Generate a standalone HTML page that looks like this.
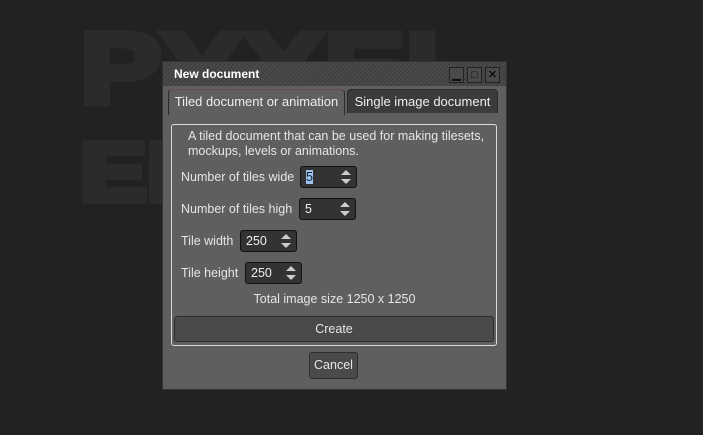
<!DOCTYPE html>
<html><head><style>
body{margin:0;width:703px;height:435px;background:#222;overflow:hidden;position:relative;font-family:"Liberation Sans",sans-serif;}
.a{position:absolute}
.logo{color:#2b2b2b;-webkit-text-stroke:7px #2b2b2b;font-weight:bold;font-family:"Liberation Sans",sans-serif;transform-origin:0 0;}
.dlg{left:163px;top:62px;width:343px;height:327px;background:#5f5f5f;box-shadow:0 0 0 1px #333;}
.title{left:0;top:0;width:343px;height:24px;background:repeating-linear-gradient(135deg,#3c3c3c 0 1px,#4a4a4a 1px 3px);color:#fff;font-weight:bold;font-size:12px;line-height:24px;}
.wb{top:5px;width:15px;height:16px;background:#4a4a4a;border:1px solid #222;box-sizing:border-box;color:#111;font-size:11px;text-align:center;line-height:14px;font-weight:bold}
.tab{height:24px;border:1px solid #2a2a2a;border-bottom:none;border-radius:4px 4px 0 0;color:#eee;font-size:13px;line-height:24px;text-align:center;box-sizing:border-box}
.t{color:#e6e6e6;font-size:12.5px;}
.sp{height:22px;background:#333;border:1px solid #111;border-radius:3px;box-sizing:border-box;color:#eee;font-size:12.5px;line-height:20px;padding-left:5px}
.ar{position:absolute;right:5px;top:3px;width:0;height:0;border-left:5px solid transparent;border-right:5px solid transparent;border-bottom:5px solid #ccc}
.ar2{position:absolute;right:5px;top:12px;width:0;height:0;border-left:5px solid transparent;border-right:5px solid transparent;border-top:5px solid #ccc}
</style></head><body>
<div class="a logo" style="left:80px;top:14px;font-size:100px;line-height:110px;transform:scaleX(1.22)">PYXEL</div>
<div class="a logo" style="left:80px;top:128px;font-size:82px;line-height:90px;transform:scaleX(1.22)">ED</div>
<div class="a dlg">
 <div class="a title"><span style="margin-left:11px">New document</span></div>
 <div class="a wb" style="left:286px">▁</div>
 <div class="a wb" style="left:304px">□</div>
 <div class="a wb" style="left:322px">✕</div>
 <div class="a tab" style="left:5px;top:27px;width:177px;background:#5f5f5f;border-top-color:#6a4a4a;height:26px">Tiled document or animation</div>
 <div class="a tab" style="left:184px;top:27px;width:151px;background:#3b3b3b">Single image document</div>
 <div class="a" style="left:8px;top:62px;width:326px;height:222px;border:1px solid #ddd;border-radius:3px;box-sizing:border-box"></div>
 <div class="a t" style="left:25px;top:67px;line-height:15px">A tiled document that can be used for making tilesets,<br>mockups, levels or animations.</div>
 <div class="a t" style="left:18px;top:108px">Number of tiles wide</div>
 <div class="a sp" style="left:137px;top:104px;width:57px"><span style="background:#9ec3ee;color:#123">5</span><i class="ar"></i><i class="ar2"></i></div>
 <div class="a t" style="left:18px;top:140px">Number of tiles high</div>
 <div class="a sp" style="left:136px;top:136px;width:57px">5<i class="ar"></i><i class="ar2"></i></div>
 <div class="a t" style="left:18px;top:172px">Tile width</div>
 <div class="a sp" style="left:77px;top:168px;width:57px">250<i class="ar"></i><i class="ar2"></i></div>
 <div class="a t" style="left:18px;top:204px">Tile height</div>
 <div class="a sp" style="left:82px;top:200px;width:57px">250<i class="ar"></i><i class="ar2"></i></div>
 <div class="a t" style="left:0;width:343px;text-align:center;top:230px">Total image size 1250 x 1250</div>
 <div class="a t" style="left:11px;top:254px;width:320px;height:26px;background:#4a4a4a;border:1px solid #2e2e2e;border-radius:3px;box-sizing:border-box;text-align:center;line-height:24px">Create</div>
 <div class="a t" style="left:146px;top:290px;width:49px;height:27px;background:#4a4a4a;border:1px solid #2e2e2e;border-radius:3px;box-sizing:border-box;text-align:center;line-height:25px">Cancel</div>
</div>
</body></html>
